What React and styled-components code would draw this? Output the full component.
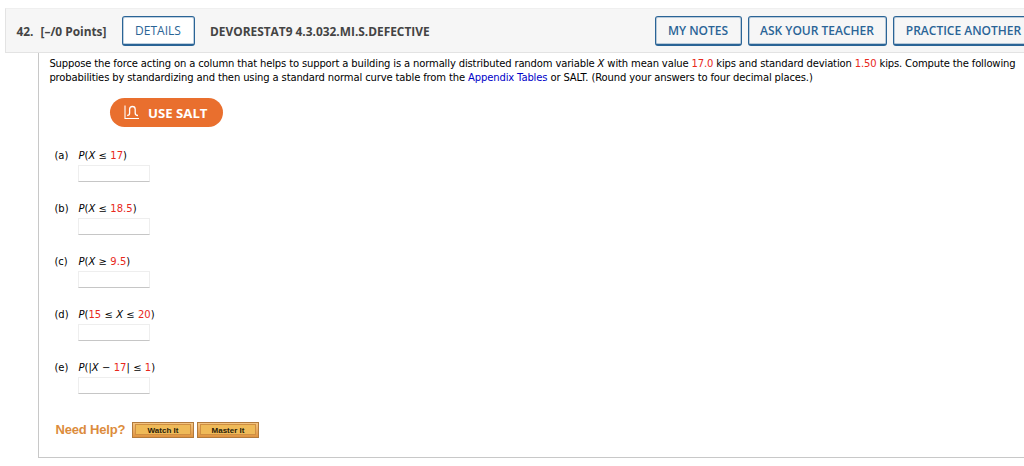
import styled, { createGlobalStyle } from "styled-components";

const GlobalStyle = createGlobalStyle`
  * {
    box-sizing: border-box;
  }
  body {
    margin: 0;
    background-color: white;
    overflow: hidden;
  }
`;

const Container = styled.div`
  width: 1024px;
  height: 466px;
  padding: 8px 0 0 5px;
  overflow: hidden;
  font-family: Verdana, "DejaVu Sans", sans-serif;
  font-size: 10px;
  color: black;
`;

const Header = styled.div`
  display: flex;
  align-items: center;
  width: 1100px;
  height: 45px;
  padding-left: 10.5px;
  background-color: #f6f6f6;
  border: 1px solid #e3e3e3;
  border-top-color: #efefef;
  font-family: "Open Sans", sans-serif;
  font-size: 11.9px;
  font-weight: 700;
  line-height: 16px;
  color: #444;
  white-space: nowrap;
`;
const Number = styled.span`
  width: 24px;
`;
const Points = styled.span`
  width: 81px;
`;
const Name = styled.span`
  width: 460px;
  padding-left: 15.5px;
`;
const HeaderButton = styled.button`
  flex: none;
  width: ${(props) => props.$width}px;
  height: 30px;
  margin-right: ${(props) => props.$gap || 0}px;
  padding: 0;
  border: 1px solid #2a6496;
  border-bottom-width: 2px;
  border-radius: 3px;
  box-shadow: inset 0 0 0 1px rgba(42, 100, 150, 0.3);
  background-color: ${(props) => (props.$white ? "white" : "transparent")};
  font-family: "Open Sans", sans-serif;
  font-size: 12px;
  font-weight: ${(props) => (props.$white ? 500 : 600)};
  color: #2a6496;
  white-space: nowrap;
`;

const Content = styled.div`
  width: 1100px;
  height: 405px;
  margin-left: 33px;
  padding: 4px 0 0 10.4px;
  border: 1px solid #c8c8c8;
  border-top: none;
`;
const Line = styled.div`
  height: 13.5px;
  line-height: 14px;
  letter-spacing: ${(props) => props.$spacing || 0}px;
  white-space: nowrap;
`;
const Red = styled.span`
  color: #e8281c;
`;
const Link = styled.a`
  color: #0000c8;
`;

const SaltButton = styled.button`
  display: flex;
  align-items: center;
  width: 113px;
  height: 29px;
  margin: 14px 0 21px 60.6px;
  padding: 0 0 0 14px;
  border: none;
  border-radius: 15px;
  background-color: #e96f2e;
  font-family: "Open Sans", sans-serif;
  font-size: 13.2px;
  font-weight: 700;
  color: white;
  white-space: nowrap;
`;
const SaltIcon = styled.svg`
  flex: none;
  width: 15px;
  height: 15px;
  margin: -1px 9px 0 0;
`;

const Part = styled.div`
  display: flex;
  height: 53.1px;
  padding-left: 5px;
`;
const Letter = styled.span`
  width: 24px;
  line-height: 15px;
`;
const Answer = styled.div``;
const Expression = styled.div`
  height: 17px;
  line-height: 15px;
  letter-spacing: 0.05px;
  white-space: nowrap;
`;
const AnswerInput = styled.input`
  display: block;
  width: 72px;
  height: 17px;
  padding: 0;
  border: 1px solid #eee;
  border-bottom-color: #c6c6c6;
  background-color: white;
`;

const Help = styled.div`
  display: flex;
  align-items: center;
  height: 17px;
  margin-top: 8px;
  padding-left: 6px;
`;
const HelpTitle = styled.span`
  width: 76.6px;
  font-family: Arial, "Liberation Sans", sans-serif;
  font-size: 13px;
  font-weight: 700;
  letter-spacing: -0.15px;
  color: #dc8c3c;
  white-space: nowrap;
`;
const HelpButton = styled.button`
  width: 62px;
  height: 16px;
  margin-right: 3px;
  padding: 1px 2px 2px;
  border: 1px solid #b27a3c;
  background: linear-gradient(#f3c583, #e09440);
`;
const HelpLabel = styled.span`
  display: block;
  height: 11px;
  border: 1px solid #cf8f42;
  background-color: #efba58;
  font-family: Arial, "Liberation Sans", sans-serif;
  font-size: 8px;
  font-weight: 700;
  line-height: 11px;
  color: #2a1c08;
`;

const parts = [
  {
    letter: "a",
    expression: (
      <>
        <i>P</i>(<i>X</i> ≤ <Red>17</Red>)
      </>
    ),
  },
  {
    letter: "b",
    expression: (
      <>
        <i>P</i>(<i>X</i> ≤ <Red>18.5</Red>)
      </>
    ),
  },
  {
    letter: "c",
    expression: (
      <>
        <i>P</i>(<i>X</i> ≥ <Red>9.5</Red>)
      </>
    ),
  },
  {
    letter: "d",
    expression: (
      <>
        <i>P</i>(<Red>15</Red> ≤ <i>X</i> ≤ <Red>20</Red>)
      </>
    ),
  },
  {
    letter: "e",
    expression: (
      <>
        <i>P</i>(|<i>X</i> − <Red>17</Red>| ≤ <Red>1</Red>)
      </>
    ),
  },
];

const App = () => {
  return (
    <Container>
      <GlobalStyle />
      <Header>
        <Number>42.</Number>
        <Points>[–/0 Points]</Points>
        <HeaderButton $width={73} $white>
          DETAILS
        </HeaderButton>
        <Name>DEVORESTAT9 4.3.032.MI.S.DEFECTIVE</Name>
        <HeaderButton $width={87} $gap={6}>
          MY NOTES
        </HeaderButton>
        <HeaderButton $width={139} $gap={6}>
          ASK YOUR TEACHER
        </HeaderButton>
        <HeaderButton $width={142}>PRACTICE ANOTHER</HeaderButton>
      </Header>
      <Content>
        <Line $spacing={-0.143}>
          Suppose the force acting on a column that helps to support a building
          is a normally distributed random variable <i>X</i> with mean value{" "}
          <Red>17.0</Red> kips and standard deviation <Red>1.50</Red> kips.
          Compute the following
        </Line>
        <Line $spacing={-0.135}>
          probabilities by standardizing and then using a standard normal curve
          table from the <Link>Appendix Tables</Link> or SALT. (Round your
          answers to four decimal places.)
        </Line>
        <SaltButton>
          <SaltIcon viewBox="0 0 15 15" fill="none" stroke="white">
            <path d="M1 0.5V13.5H15" strokeWidth="1.1" />
            <path
              d="M3.2 10.5C5 10.5 5.6 9.8 5.6 8V4.2C5.6 2.4 6.6 1.5 8.4 1.5C10.2 1.5 11.2 2.4 11.2 4.2V8C11.2 9.8 12 10.5 14 10.5"
              strokeWidth="1.3"
            />
          </SaltIcon>
          USE SALT
        </SaltButton>
        {parts.map((part) => (
          <Part key={part.letter}>
            <Letter>({part.letter})</Letter>
            <Answer>
              <Expression>{part.expression}</Expression>
              <AnswerInput />
            </Answer>
          </Part>
        ))}
        <Help>
          <HelpTitle>Need Help?</HelpTitle>
          <HelpButton>
            <HelpLabel>Watch It</HelpLabel>
          </HelpButton>
          <HelpButton>
            <HelpLabel>Master It</HelpLabel>
          </HelpButton>
        </Help>
      </Content>
    </Container>
  );
};

export default App;
